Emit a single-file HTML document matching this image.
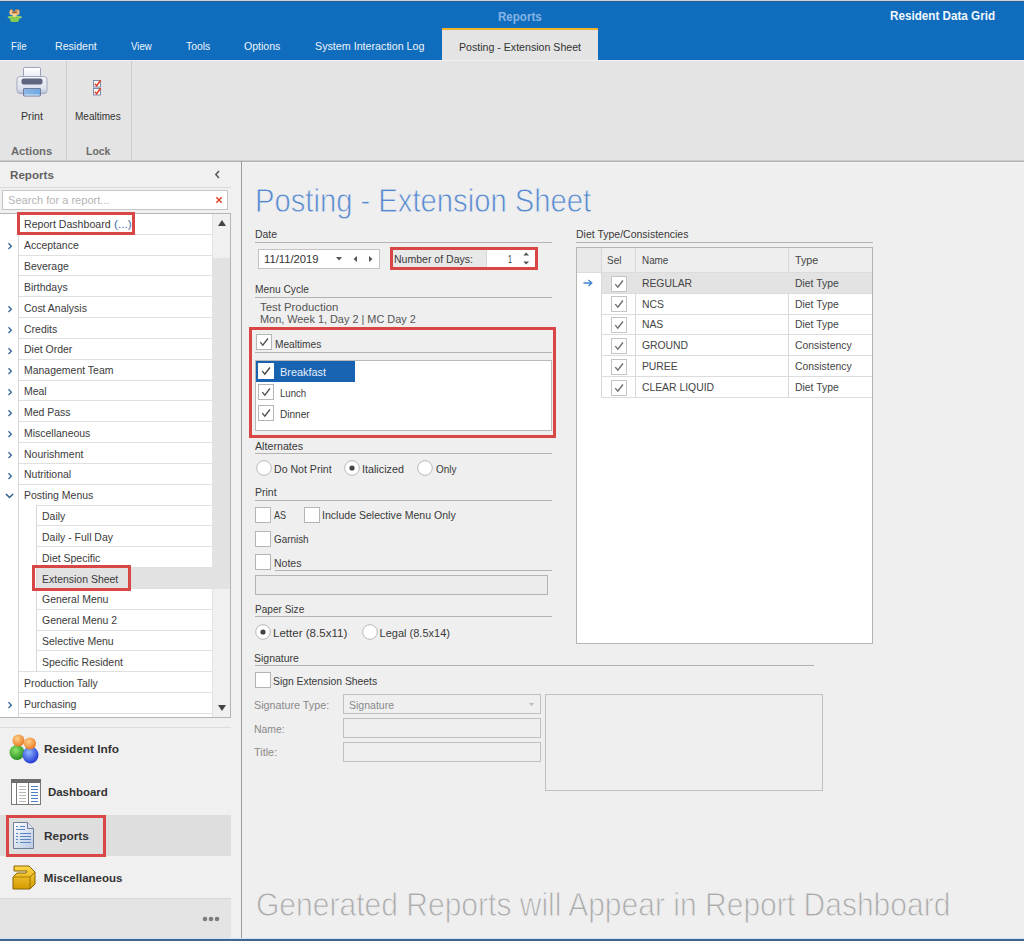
<!DOCTYPE html>
<html><head><meta charset="utf-8">
<style>
*{margin:0;padding:0;box-sizing:border-box}
html,body{width:1024px;height:941px;overflow:hidden;background:#efefef;font-family:"Liberation Sans",sans-serif;font-size:11px;color:#333}
.a{position:absolute;white-space:nowrap}
.t{position:absolute;white-space:nowrap;line-height:1}
</style></head><body>
<div class="a" style="left:0px;top:0px;width:1024px;height:60px;background:#106dbd;"></div>
<div class="a" style="left:0px;top:0px;width:1024px;height:1px;background:#c9d2db"></div>
<div class="a" style="left:0px;top:1px;width:1024px;height:1px;background:#2d5f90"></div>
<svg class="a" style="left:6px;top:8px" width="18" height="16" viewBox="0 0 18 16">
    <ellipse cx="8.8" cy="9.2" rx="7.2" ry="1.8" fill="#8fd46a"/>
    <rect x="4" y="8.5" width="9" height="5.5" rx="2.5" fill="#86cc52"/>
    <path d="M3.5 2.5 Q4.5 0.8 6.5 1.5 L8 4 L9.5 1.5 Q12 0.8 13.5 2.5 L13 7 L4 7 Z" fill="#c98a4e"/>
    <ellipse cx="5.2" cy="4.5" rx="1.7" ry="2.6" fill="#f0c894"/>
    <ellipse cx="12" cy="4.5" rx="1.5" ry="2.4" fill="#e6b47c"/>
    <ellipse cx="8.6" cy="6.8" rx="2.4" ry="2.4" fill="#f3cf9a"/>
    <path d="M6.2 4 Q8.5 5.5 10.8 4" fill="none" stroke="#9a5a28" stroke-width="1.2"/>
</svg>

<div class="a" style="left:442px;top:28px;width:156px;height:32px;background:#e4e4e4;"></div>
<div class="a" style="left:442px;top:28px;width:156px;height:2px;background:#f0b429"></div>
<div class="a" style="left:0px;top:60px;width:1024px;height:100px;background:#e4e4e4;"></div>
<div class="a" style="left:0px;top:60px;width:1024px;height:1px;background:#eef2f6"></div>
<div class="a" style="left:0px;top:160px;width:1024px;height:1px;background:#cccccc"></div>
<div class="a" style="left:0px;top:161px;width:1024px;height:1px;background:#b0b0b0"></div>
<div class="a" style="left:66px;top:61px;width:1px;height:99px;background:#cbcbcb"></div>
<div class="a" style="left:131px;top:61px;width:1px;height:99px;background:#cbcbcb"></div>
<svg class="a" style="left:15px;top:66px" width="34" height="32" viewBox="0 0 34 32">
    <defs><linearGradient id="pb" x1="0" y1="0" x2="0" y2="1"><stop offset="0" stop-color="#f4f5fb"/><stop offset="0.7" stop-color="#dfe2ee"/><stop offset="1" stop-color="#b4bcd8"/></linearGradient>
    <linearGradient id="pp" x1="0" y1="0" x2="0" y2="1"><stop offset="0" stop-color="#ffffff"/><stop offset="1" stop-color="#e2e6f2"/></linearGradient>
    <linearGradient id="pt" x1="0" y1="0" x2="1" y2="0"><stop offset="0" stop-color="#8fb6e6"/><stop offset="1" stop-color="#6fa8e0"/></linearGradient></defs>
    <rect x="8.5" y="1.5" width="17" height="13" rx="1" fill="url(#pp)" stroke="#9aa2b8"/>
    <rect x="2" y="10.5" width="30" height="17" rx="3" fill="url(#pb)" stroke="#a2a9c0"/>
    <rect x="6.5" y="12.5" width="21" height="6" rx="2" fill="#5e6680"/>
    <rect x="8.5" y="22.5" width="17" height="7.5" rx="0.5" fill="url(#pt)" stroke="#6f7a96"/>
    <line x1="9.5" y1="29" x2="24.5" y2="29" stroke="#d8ecfa"/>
  </svg>
  <svg class="a" style="left:93px;top:79px" width="9" height="18" viewBox="0 0 9 18">
    <rect x="0.5" y="1.5" width="7" height="6.5" fill="#fff" stroke="#7c8aa8"/>
    <rect x="0.5" y="9.5" width="7" height="6.5" fill="#fff" stroke="#7c8aa8"/>
    <path d="M1.8 4.8 L3.6 6.8 L7.6 1.2" fill="none" stroke="#e0412a" stroke-width="1.6"/>
    <path d="M1.8 12.8 L3.6 14.8 L7.6 9.2" fill="none" stroke="#e0412a" stroke-width="1.6"/>
  </svg>
<div class="a" style="left:0px;top:162px;width:241px;height:776px;background:#f0f0f0;"></div>
<div class="a" style="left:241px;top:161px;width:1px;height:777px;background:#9c9c9c"></div>
<div class="a" style="left:242px;top:162px;width:782px;height:776px;background:#efefef;"></div>
<div class="a" style="left:242px;top:162px;width:782px;height:1px;background:#f6f6f6"></div>
<svg class="a" style="left:214px;top:170px" width="7" height="9" viewBox="0 0 7 9"><path d="M5 1 L1.8 4.5 L5 8" fill="none" stroke="#555" stroke-width="1.5"/></svg>
<div class="a" style="left:0px;top:187px;width:231px;height:1px;background:#dadada"></div>
<div class="a" style="left:2px;top:190px;width:226px;height:20px;background:#fff;border:1px solid #c6c6c6;"></div>
<svg class="a" style="left:215px;top:196px" width="8" height="8" viewBox="0 0 8 8"><path d="M1.3 1.3 L6.7 6.7 M6.7 1.3 L1.3 6.7" stroke="#e5482e" stroke-width="1.5"/></svg>
<div class="a" style="left:0px;top:213px;width:231px;height:505px;background:#fff;border:1px solid #b5b5b5;border-left:none;"></div>
<div class="a" style="left:212px;top:214px;width:18px;height:503px;background:#f0f0f0;"></div>
<div class="a" style="left:212px;top:214px;width:1px;height:503px;background:#e3e3e3"></div>
<div class="a" style="left:212px;top:258px;width:18px;height:331px;background:#e2e2e2;"></div>
<svg class="a" style="left:218px;top:220px" width="8" height="6" viewBox="0 0 8 6"><path d="M0 6 L4 0 L8 6Z" fill="#444"/></svg>
<svg class="a" style="left:218px;top:705px" width="8" height="6" viewBox="0 0 8 6"><path d="M0 0 L4 6 L8 0Z" fill="#444"/></svg>
<div class="a" style="left:18px;top:234px;width:194px;height:1px;background:#e0e0e0"></div>
<svg class="a" style="left:7px;top:242.33px" width="6" height="9" viewBox="0 0 6 9"><path d="M1.5 1.3 L4.3 4.2 L1.5 7.1" fill="none" stroke="#3a6a9a" stroke-width="1.4"/></svg>
<div class="a" style="left:18px;top:255px;width:194px;height:1px;background:#e0e0e0"></div>
<div class="a" style="left:18px;top:275px;width:194px;height:1px;background:#e0e0e0"></div>
<div class="a" style="left:18px;top:296px;width:194px;height:1px;background:#e0e0e0"></div>
<svg class="a" style="left:7px;top:304.83px" width="6" height="9" viewBox="0 0 6 9"><path d="M1.5 1.3 L4.3 4.2 L1.5 7.1" fill="none" stroke="#3a6a9a" stroke-width="1.4"/></svg>
<div class="a" style="left:18px;top:317px;width:194px;height:1px;background:#e0e0e0"></div>
<svg class="a" style="left:7px;top:325.66px" width="6" height="9" viewBox="0 0 6 9"><path d="M1.5 1.3 L4.3 4.2 L1.5 7.1" fill="none" stroke="#3a6a9a" stroke-width="1.4"/></svg>
<div class="a" style="left:18px;top:338px;width:194px;height:1px;background:#e0e0e0"></div>
<svg class="a" style="left:7px;top:346.50px" width="6" height="9" viewBox="0 0 6 9"><path d="M1.5 1.3 L4.3 4.2 L1.5 7.1" fill="none" stroke="#3a6a9a" stroke-width="1.4"/></svg>
<div class="a" style="left:18px;top:359px;width:194px;height:1px;background:#e0e0e0"></div>
<svg class="a" style="left:7px;top:367.33px" width="6" height="9" viewBox="0 0 6 9"><path d="M1.5 1.3 L4.3 4.2 L1.5 7.1" fill="none" stroke="#3a6a9a" stroke-width="1.4"/></svg>
<div class="a" style="left:18px;top:380px;width:194px;height:1px;background:#e0e0e0"></div>
<svg class="a" style="left:7px;top:388.16px" width="6" height="9" viewBox="0 0 6 9"><path d="M1.5 1.3 L4.3 4.2 L1.5 7.1" fill="none" stroke="#3a6a9a" stroke-width="1.4"/></svg>
<div class="a" style="left:18px;top:400px;width:194px;height:1px;background:#e0e0e0"></div>
<svg class="a" style="left:7px;top:409.00px" width="6" height="9" viewBox="0 0 6 9"><path d="M1.5 1.3 L4.3 4.2 L1.5 7.1" fill="none" stroke="#3a6a9a" stroke-width="1.4"/></svg>
<div class="a" style="left:18px;top:421px;width:194px;height:1px;background:#e0e0e0"></div>
<svg class="a" style="left:7px;top:429.83px" width="6" height="9" viewBox="0 0 6 9"><path d="M1.5 1.3 L4.3 4.2 L1.5 7.1" fill="none" stroke="#3a6a9a" stroke-width="1.4"/></svg>
<div class="a" style="left:18px;top:442px;width:194px;height:1px;background:#e0e0e0"></div>
<svg class="a" style="left:7px;top:450.66px" width="6" height="9" viewBox="0 0 6 9"><path d="M1.5 1.3 L4.3 4.2 L1.5 7.1" fill="none" stroke="#3a6a9a" stroke-width="1.4"/></svg>
<div class="a" style="left:18px;top:463px;width:194px;height:1px;background:#e0e0e0"></div>
<svg class="a" style="left:7px;top:471.50px" width="6" height="9" viewBox="0 0 6 9"><path d="M1.5 1.3 L4.3 4.2 L1.5 7.1" fill="none" stroke="#3a6a9a" stroke-width="1.4"/></svg>
<div class="a" style="left:18px;top:484px;width:194px;height:1px;background:#e0e0e0"></div>
<svg class="a" style="left:5px;top:492.83px" width="9" height="6" viewBox="0 0 9 6"><path d="M1 1 L4.5 4.5 L8 1" fill="none" stroke="#2f5f8f" stroke-width="1.5"/></svg>
<div class="a" style="left:36px;top:505px;width:176px;height:1px;background:#e0e0e0"></div>
<div class="a" style="left:36px;top:525px;width:176px;height:1px;background:#e0e0e0"></div>
<div class="a" style="left:36px;top:546px;width:176px;height:1px;background:#e0e0e0"></div>
<div class="a" style="left:37px;top:567px;width:175px;height:21px;background:#e2e2e2;"></div>
<div class="a" style="left:36px;top:567px;width:176px;height:1px;background:#e0e0e0"></div>
<div class="a" style="left:36px;top:588px;width:176px;height:1px;background:#e0e0e0"></div>
<div class="a" style="left:36px;top:609px;width:176px;height:1px;background:#e0e0e0"></div>
<div class="a" style="left:36px;top:630px;width:176px;height:1px;background:#e0e0e0"></div>
<div class="a" style="left:36px;top:650px;width:176px;height:1px;background:#e0e0e0"></div>
<div class="a" style="left:18px;top:671px;width:194px;height:1px;background:#e0e0e0"></div>
<div class="a" style="left:18px;top:692px;width:194px;height:1px;background:#e0e0e0"></div>
<svg class="a" style="left:7px;top:700.66px" width="6" height="9" viewBox="0 0 6 9"><path d="M1.5 1.3 L4.3 4.2 L1.5 7.1" fill="none" stroke="#3a6a9a" stroke-width="1.4"/></svg>
<div class="a" style="left:18px;top:713px;width:194px;height:1px;background:#e0e0e0"></div>
<div class="a" style="left:18px;top:214px;width:1px;height:503px;background:#d6d6d6"></div>
<div class="a" style="left:36px;top:505px;width:1px;height:167px;background:#d6d6d6"></div>
<div class="a" style="left:17px;top:212px;width:118px;height:23px;background:none;border:3px solid #d94646;"></div>
<div class="a" style="left:32px;top:565px;width:99px;height:26px;background:none;border:3px solid #d94646;"></div>
<div class="a" style="left:0px;top:727px;width:231px;height:1px;background:#dcdcdc"></div>
<svg class="a" style="left:9px;top:733px" width="30" height="31" viewBox="0 0 30 31">
  <defs>
  <radialGradient id="og" cx="0.4" cy="0.35" r="0.7"><stop offset="0" stop-color="#ffd08a"/><stop offset="1" stop-color="#e8761c"/></radialGradient>
  <radialGradient id="gg" cx="0.4" cy="0.35" r="0.7"><stop offset="0" stop-color="#8fe36a"/><stop offset="1" stop-color="#1f8a1a"/></radialGradient>
  <radialGradient id="bg" cx="0.4" cy="0.35" r="0.7"><stop offset="0" stop-color="#8fb8ff"/><stop offset="1" stop-color="#1a2fd0"/></radialGradient>
  </defs>
  <ellipse cx="8" cy="19.5" rx="7.5" ry="7.5" fill="url(#gg)"/>
  <circle cx="9.5" cy="7.5" r="6" fill="url(#og)"/>
  <ellipse cx="21.5" cy="22" rx="8" ry="8.5" fill="url(#bg)"/>
  <circle cx="21" cy="10.5" r="6" fill="url(#og)"/>
</svg>

<svg class="a" style="left:11px;top:779px" width="30" height="26" viewBox="0 0 30 26">
  <rect x="0.5" y="0.5" width="29" height="25" fill="#fdfdfd" stroke="#777"/>
  <rect x="0" y="0" width="30" height="4" fill="#6d6d6d"/>
  <line x1="5.5" y1="4" x2="5.5" y2="26" stroke="#777"/>
  <line x1="17.5" y1="4" x2="17.5" y2="26" stroke="#777"/>
  <g stroke="#b9b9b9" stroke-width="1"><line x1="8" y1="7.5" x2="15" y2="7.5"/><line x1="8" y1="10.5" x2="15" y2="10.5"/><line x1="8" y1="13.5" x2="15" y2="13.5"/><line x1="8" y1="16.5" x2="15" y2="16.5"/><line x1="8" y1="19.5" x2="15" y2="19.5"/><line x1="8" y1="22.5" x2="15" y2="22.5"/></g>
  <g stroke="#4a7fc4" stroke-width="1"><line x1="20" y1="7.5" x2="27" y2="7.5"/><line x1="20" y1="10.5" x2="27" y2="10.5"/><line x1="20" y1="13.5" x2="27" y2="13.5"/><line x1="20" y1="16.5" x2="27" y2="16.5"/><line x1="20" y1="19.5" x2="27" y2="19.5"/><line x1="20" y1="22.5" x2="27" y2="22.5"/></g>
</svg>

<div class="a" style="left:0px;top:815px;width:231px;height:41px;background:#dedede;"></div>
<svg class="a" style="left:13px;top:822px" width="22" height="27" viewBox="0 0 22 27">
  <defs><linearGradient id="rg" x1="0" y1="0" x2="1" y2="1"><stop offset="0" stop-color="#ffffff"/><stop offset="1" stop-color="#b8c8e0"/></linearGradient></defs>
  <path d="M0.5 0.5 H14.5 L20.5 6.5 V26.5 H0.5 Z" fill="url(#rg)" stroke="#6f7f9a"/>
  <path d="M14.5 0.5 V6.5 H20.5" fill="#dfe6f0" stroke="#6f7f9a"/>
  <g stroke="#5a86c8" stroke-width="1"><line x1="3" y1="4.5" x2="5" y2="4.5"/><line x1="7" y1="4.5" x2="12" y2="4.5"/><line x1="3" y1="7.5" x2="12" y2="7.5"/>
  <line x1="3" y1="11.5" x2="5" y2="11.5"/><line x1="7" y1="11.5" x2="18" y2="11.5"/>
  <line x1="3" y1="14.5" x2="5" y2="14.5"/><line x1="7" y1="14.5" x2="18" y2="14.5"/>
  <line x1="3" y1="17.5" x2="5" y2="17.5"/><line x1="7" y1="17.5" x2="18" y2="17.5"/>
  <line x1="3" y1="20.5" x2="5" y2="20.5"/><line x1="7" y1="20.5" x2="18" y2="20.5"/></g>
</svg>

<div class="a" style="left:6px;top:815px;width:100px;height:42px;background:none;border:3px solid #d94646;"></div>
<svg class="a" style="left:12px;top:865px" width="25" height="25" viewBox="0 0 25 25">
  <defs><linearGradient id="yg" x1="0" y1="0" x2="0" y2="1"><stop offset="0" stop-color="#ffd84a"/><stop offset="1" stop-color="#d49a00"/></linearGradient></defs>
  <path d="M2 1 H17 L23 7 V19 L18 24 H1 V12 L5 8 H14 L15 6 H2 Z" fill="url(#yg)" stroke="#8a6400" stroke-width="1"/>
  <path d="M18 24 V12 L23 7" fill="none" stroke="#9a7200"/>
  <path d="M1 12 H18" stroke="#b08000"/>
</svg>

<div class="a" style="left:0px;top:898px;width:231px;height:40px;background:#e4e4e4;border:1px solid #d8d8d8;border-left:none;border-right:none;border-bottom:none;"></div>
<svg class="a" style="left:202px;top:916px" width="18" height="6" viewBox="0 0 18 6"><circle cx="3" cy="3" r="2.3" fill="#7d7d7d"/><circle cx="9" cy="3" r="2.3" fill="#7d7d7d"/><circle cx="15" cy="3" r="2.3" fill="#7d7d7d"/></svg>
<div class="a" style="left:255px;top:242px;width:297px;height:1px;background:#b3b3b3"></div>
<div class="a" style="left:258px;top:249px;width:122px;height:20px;background:#fff;border:1px solid #c3c3c3;"></div>
<svg class="a" style="left:336px;top:257px" width="6" height="4" viewBox="0 0 6 4"><path d="M0 0H6L3 3.5Z" fill="#555"/></svg>
<svg class="a" style="left:353px;top:256px" width="4" height="6" viewBox="0 0 4 6"><path d="M4 0V6L0.5 3Z" fill="#555"/></svg>
<svg class="a" style="left:369px;top:256px" width="4" height="6" viewBox="0 0 4 6"><path d="M0 0V6L3.5 3Z" fill="#555"/></svg>
<div class="a" style="left:393px;top:250px;width:94px;height:17px;background:#e8e8e8;"></div>
<div class="a" style="left:487px;top:250px;width:48px;height:17px;background:#fff;"></div>
<div class="a" style="left:486px;top:250px;width:1px;height:17px;background:#d6d6d6"></div>
<svg class="a" style="left:523px;top:252px" width="7" height="13" viewBox="0 0 7 13"><path d="M0.3 3.6 L3.2 0.6 L6.1 3.6Z" fill="#555"/><path d="M0.3 9.6 L3.2 12.4 L6.1 9.6Z" fill="#555"/></svg>
<div class="a" style="left:390px;top:247px;width:148px;height:23px;background:none;border:3px solid #d94646;"></div>
<div class="a" style="left:255px;top:297px;width:297px;height:1px;background:#b3b3b3"></div>
<div class="a" style="left:256px;top:334px;width:16px;height:16px;background:#fff;border:1px solid #b5b5b5"></div>
<svg class="a" style="left:256px;top:334px" width="16" height="16" viewBox="0 0 15 15"><path d="M4 7.6 L6.4 10.4 L11.2 4.2" fill="none" stroke="#555" stroke-width="1.3"/></svg>
<div class="a" style="left:255px;top:352px;width:297px;height:1px;background:#b3b3b3"></div>
<div class="a" style="left:255px;top:360px;width:297px;height:71px;background:#fff;border:1px solid #b9b9b9;"></div>
<div class="a" style="left:256px;top:361px;width:99px;height:21px;background:#1863b1;"></div>
<div class="a" style="left:258px;top:363px;width:16px;height:16px;background:#fff;border:1px solid #fff"></div>
<svg class="a" style="left:258px;top:363px" width="16" height="16" viewBox="0 0 15 15"><path d="M4 7.6 L6.4 10.4 L11.2 4.2" fill="none" stroke="#444" stroke-width="1.3"/></svg>
<div class="a" style="left:258px;top:384px;width:16px;height:16px;background:#fff;border:1px solid #b5b5b5"></div>
<svg class="a" style="left:258px;top:384px" width="16" height="16" viewBox="0 0 15 15"><path d="M4 7.6 L6.4 10.4 L11.2 4.2" fill="none" stroke="#555" stroke-width="1.3"/></svg>
<div class="a" style="left:258px;top:405px;width:16px;height:16px;background:#fff;border:1px solid #b5b5b5"></div>
<svg class="a" style="left:258px;top:405px" width="16" height="16" viewBox="0 0 15 15"><path d="M4 7.6 L6.4 10.4 L11.2 4.2" fill="none" stroke="#555" stroke-width="1.3"/></svg>
<div class="a" style="left:249px;top:327px;width:307px;height:111px;background:none;border:3px solid #d94646;"></div>
<div class="a" style="left:255px;top:453px;width:297px;height:1px;background:#b3b3b3"></div>
<svg class="a" style="left:256px;top:460px" width="16" height="16" viewBox="0 0 16 16"><circle cx="8" cy="8" r="7.3" fill="#fff" stroke="#b9b9b9"/></svg>
<svg class="a" style="left:344px;top:460px" width="16" height="16" viewBox="0 0 16 16"><circle cx="8" cy="8" r="7.3" fill="#fff" stroke="#b9b9b9"/><circle cx="8" cy="8" r="2.6" fill="#444"/></svg>
<svg class="a" style="left:417px;top:460px" width="16" height="16" viewBox="0 0 16 16"><circle cx="8" cy="8" r="7.3" fill="#fff" stroke="#b9b9b9"/></svg>
<div class="a" style="left:255px;top:500px;width:297px;height:1px;background:#b3b3b3"></div>
<div class="a" style="left:255px;top:507px;width:16px;height:16px;background:#fff;border:1px solid #b5b5b5"></div>
<div class="a" style="left:304px;top:507px;width:16px;height:16px;background:#fff;border:1px solid #b5b5b5"></div>
<div class="a" style="left:255px;top:531px;width:16px;height:16px;background:#fff;border:1px solid #b5b5b5"></div>
<div class="a" style="left:255px;top:554px;width:16px;height:16px;background:#fff;border:1px solid #b5b5b5"></div>
<div class="a" style="left:275px;top:570px;width:277px;height:1px;background:#b3b3b3"></div>
<div class="a" style="left:255px;top:575px;width:293px;height:20px;background:#ececec;border:1px solid #b5b5b5;"></div>
<div class="a" style="left:255px;top:616px;width:297px;height:1px;background:#b3b3b3"></div>
<svg class="a" style="left:255px;top:624px" width="16" height="16" viewBox="0 0 16 16"><circle cx="8" cy="8" r="7.3" fill="#fff" stroke="#b9b9b9"/><circle cx="8" cy="8" r="2.6" fill="#444"/></svg>
<svg class="a" style="left:362px;top:624px" width="16" height="16" viewBox="0 0 16 16"><circle cx="8" cy="8" r="7.3" fill="#fff" stroke="#b9b9b9"/></svg>
<div class="a" style="left:255px;top:665px;width:559px;height:1px;background:#b3b3b3"></div>
<div class="a" style="left:255px;top:672px;width:16px;height:16px;background:#fff;border:1px solid #b5b5b5"></div>
<div class="a" style="left:343px;top:694px;width:198px;height:20px;background:#efefef;border:1px solid #c0c0c0;"></div>
<svg class="a" style="left:529px;top:703px" width="5" height="3" viewBox="0 0 5 3"><path d="M0 0H5L2.5 3Z" fill="#bbb"/></svg>
<div class="a" style="left:343px;top:718px;width:198px;height:20px;background:#efefef;border:1px solid #c0c0c0;"></div>
<div class="a" style="left:343px;top:742px;width:198px;height:20px;background:#efefef;border:1px solid #c0c0c0;"></div>
<div class="a" style="left:545px;top:694px;width:278px;height:97px;background:#efefef;border:1px solid #c0c0c0;"></div>
<div class="a" style="left:576px;top:242px;width:297px;height:1px;background:#b3b3b3"></div>
<div class="a" style="left:576px;top:247px;width:297px;height:397px;background:#fff;border:1px solid #b5b5b5;"></div>
<div class="a" style="left:577px;top:248px;width:295px;height:24px;background:#eeeeee;"></div>
<div class="a" style="left:577px;top:248px;width:24px;height:24px;background:#e9e9e9;"></div>
<div class="a" style="left:601px;top:248px;width:1px;height:149px;background:#d9d9d9"></div>
<div class="a" style="left:635px;top:248px;width:1px;height:149px;background:#d9d9d9"></div>
<div class="a" style="left:788px;top:248px;width:1px;height:149px;background:#d9d9d9"></div>
<div class="a" style="left:577px;top:272px;width:295px;height:1px;background:#dcdcdc"></div>
<div class="a" style="left:602px;top:273px;width:270px;height:20px;background:#e3e3e3;"></div>
<div class="a" style="left:601px;top:293px;width:271px;height:1px;background:#dcdcdc"></div>
<div class="a" style="left:611px;top:276px;width:16px;height:16px;background:#fff;border:1px solid #c4c4c4"></div>
<svg class="a" style="left:611px;top:276px" width="16" height="16" viewBox="0 0 15 15"><path d="M4 7.6 L6.4 10.4 L11.2 4.2" fill="none" stroke="#6e6e6e" stroke-width="1.3"/></svg>
<div class="a" style="left:601px;top:314px;width:271px;height:1px;background:#dcdcdc"></div>
<div class="a" style="left:611px;top:296px;width:16px;height:16px;background:#fff;border:1px solid #c4c4c4"></div>
<svg class="a" style="left:611px;top:296px" width="16" height="16" viewBox="0 0 15 15"><path d="M4 7.6 L6.4 10.4 L11.2 4.2" fill="none" stroke="#6e6e6e" stroke-width="1.3"/></svg>
<div class="a" style="left:601px;top:334px;width:271px;height:1px;background:#dcdcdc"></div>
<div class="a" style="left:611px;top:317px;width:16px;height:16px;background:#fff;border:1px solid #c4c4c4"></div>
<svg class="a" style="left:611px;top:317px" width="16" height="16" viewBox="0 0 15 15"><path d="M4 7.6 L6.4 10.4 L11.2 4.2" fill="none" stroke="#6e6e6e" stroke-width="1.3"/></svg>
<div class="a" style="left:601px;top:355px;width:271px;height:1px;background:#dcdcdc"></div>
<div class="a" style="left:611px;top:338px;width:16px;height:16px;background:#fff;border:1px solid #c4c4c4"></div>
<svg class="a" style="left:611px;top:338px" width="16" height="16" viewBox="0 0 15 15"><path d="M4 7.6 L6.4 10.4 L11.2 4.2" fill="none" stroke="#6e6e6e" stroke-width="1.3"/></svg>
<div class="a" style="left:601px;top:376px;width:271px;height:1px;background:#dcdcdc"></div>
<div class="a" style="left:611px;top:359px;width:16px;height:16px;background:#fff;border:1px solid #c4c4c4"></div>
<svg class="a" style="left:611px;top:359px" width="16" height="16" viewBox="0 0 15 15"><path d="M4 7.6 L6.4 10.4 L11.2 4.2" fill="none" stroke="#6e6e6e" stroke-width="1.3"/></svg>
<div class="a" style="left:601px;top:397px;width:271px;height:1px;background:#dcdcdc"></div>
<div class="a" style="left:611px;top:380px;width:16px;height:16px;background:#fff;border:1px solid #c4c4c4"></div>
<svg class="a" style="left:611px;top:380px" width="16" height="16" viewBox="0 0 15 15"><path d="M4 7.6 L6.4 10.4 L11.2 4.2" fill="none" stroke="#6e6e6e" stroke-width="1.3"/></svg>
<svg class="a" style="left:583px;top:279px" width="10" height="8" viewBox="0 0 10 8"><path d="M0.5 4H8.5 M5.5 1 L8.8 4 L5.5 7" fill="none" stroke="#3f86d0" stroke-width="1.3"/></svg>
<div class="t" style="left:498.00px;top:11.14px;font-size:12px;font-weight:700;color:#85b3e6;transform:scaleX(0.964);transform-origin:0 0;">Reports</div>
<div class="t" style="left:889.60px;top:9.99px;font-size:12.3px;font-weight:700;color:#f2f7fd;transform:scaleX(0.949);transform-origin:0 0;">Resident Data Grid</div>
<div class="t" style="left:10.60px;top:41.39px;font-size:11px;font-weight:400;color:#eef4fb;transform:scaleX(0.875);transform-origin:0 0;">File</div>
<div class="t" style="left:54.70px;top:41.49px;font-size:11px;font-weight:400;color:#eef4fb;transform:scaleX(0.962);transform-origin:0 0;">Resident</div>
<div class="t" style="left:130.90px;top:41.49px;font-size:11px;font-weight:400;color:#eef4fb;transform:scaleX(0.878);transform-origin:0 0;">View</div>
<div class="t" style="left:186.00px;top:41.49px;font-size:11px;font-weight:400;color:#eef4fb;transform:scaleX(0.940);transform-origin:0 0;">Tools</div>
<div class="t" style="left:244.40px;top:41.49px;font-size:11px;font-weight:400;color:#eef4fb;transform:scaleX(0.958);transform-origin:0 0;">Options</div>
<div class="t" style="left:314.80px;top:41.49px;font-size:11px;font-weight:400;color:#eef4fb;transform:scaleX(0.973);transform-origin:0 0;">System Interaction Log</div>
<div class="t" style="left:458.50px;top:41.69px;font-size:11px;font-weight:400;color:#333;transform:scaleX(0.964);transform-origin:0 0;">Posting - Extension Sheet</div>
<div class="t" style="left:20.50px;top:111.19px;font-size:11px;font-weight:400;color:#333;transform:scaleX(0.971);transform-origin:0 0;">Print</div>
<div class="t" style="left:74.90px;top:111.19px;font-size:11px;font-weight:400;color:#333;transform:scaleX(0.911);transform-origin:0 0;">Mealtimes</div>
<div class="t" style="left:11.20px;top:146.39px;font-size:11px;font-weight:700;color:#6c6c6c;transform:scaleX(1.022);transform-origin:0 0;">Actions</div>
<div class="t" style="left:85.50px;top:146.39px;font-size:11px;font-weight:700;color:#6c6c6c;transform:scaleX(0.949);transform-origin:0 0;">Lock</div>
<div class="t" style="left:9.50px;top:170.09px;font-size:11px;font-weight:700;color:#626262;transform:scaleX(1.057);transform-origin:0 0;">Reports</div>
<div class="t" style="left:7.90px;top:195.49px;font-size:11px;font-weight:400;color:#b4b4b4;transform:scaleX(1.007);transform-origin:0 0;">Search for a report...</div>
<div class="t" style="left:24.40px;top:219.36px;font-size:10.8px;font-weight:400;color:#3a3a3a;transform:scaleX(0.982);transform-origin:0 0;">Report Dashboard</div>
<div class="t" style="left:24.40px;top:240.19px;font-size:10.8px;font-weight:400;color:#3a3a3a;transform:scaleX(0.97);transform-origin:0 0;">Acceptance</div>
<div class="t" style="left:24.40px;top:261.02px;font-size:10.8px;font-weight:400;color:#3a3a3a;transform:scaleX(0.97);transform-origin:0 0;">Beverage</div>
<div class="t" style="left:24.40px;top:281.85px;font-size:10.8px;font-weight:400;color:#3a3a3a;transform:scaleX(0.97);transform-origin:0 0;">Birthdays</div>
<div class="t" style="left:24.40px;top:302.69px;font-size:10.8px;font-weight:400;color:#3a3a3a;transform:scaleX(0.97);transform-origin:0 0;">Cost Analysis</div>
<div class="t" style="left:24.40px;top:323.52px;font-size:10.8px;font-weight:400;color:#3a3a3a;transform:scaleX(0.97);transform-origin:0 0;">Credits</div>
<div class="t" style="left:24.40px;top:344.35px;font-size:10.8px;font-weight:400;color:#3a3a3a;transform:scaleX(0.97);transform-origin:0 0;">Diet Order</div>
<div class="t" style="left:24.40px;top:365.19px;font-size:10.8px;font-weight:400;color:#3a3a3a;transform:scaleX(0.97);transform-origin:0 0;">Management Team</div>
<div class="t" style="left:24.40px;top:386.02px;font-size:10.8px;font-weight:400;color:#3a3a3a;transform:scaleX(0.97);transform-origin:0 0;">Meal</div>
<div class="t" style="left:24.40px;top:406.85px;font-size:10.8px;font-weight:400;color:#3a3a3a;transform:scaleX(0.97);transform-origin:0 0;">Med Pass</div>
<div class="t" style="left:24.40px;top:427.69px;font-size:10.8px;font-weight:400;color:#3a3a3a;transform:scaleX(0.97);transform-origin:0 0;">Miscellaneous</div>
<div class="t" style="left:24.40px;top:448.52px;font-size:10.8px;font-weight:400;color:#3a3a3a;transform:scaleX(0.97);transform-origin:0 0;">Nourishment</div>
<div class="t" style="left:24.40px;top:469.35px;font-size:10.8px;font-weight:400;color:#3a3a3a;transform:scaleX(0.97);transform-origin:0 0;">Nutritional</div>
<div class="t" style="left:24.40px;top:490.18px;font-size:10.8px;font-weight:400;color:#3a3a3a;transform:scaleX(0.97);transform-origin:0 0;">Posting Menus</div>
<div class="t" style="left:42.10px;top:511.02px;font-size:10.8px;font-weight:400;color:#3a3a3a;transform:scaleX(0.97);transform-origin:0 0;">Daily</div>
<div class="t" style="left:42.10px;top:531.85px;font-size:10.8px;font-weight:400;color:#3a3a3a;transform:scaleX(0.97);transform-origin:0 0;">Daily - Full Day</div>
<div class="t" style="left:42.10px;top:552.68px;font-size:10.8px;font-weight:400;color:#3a3a3a;transform:scaleX(0.97);transform-origin:0 0;">Diet Specific</div>
<div class="t" style="left:42.10px;top:573.52px;font-size:10.8px;font-weight:400;color:#3a3a3a;transform:scaleX(0.97);transform-origin:0 0;">Extension Sheet</div>
<div class="t" style="left:42.10px;top:594.35px;font-size:10.8px;font-weight:400;color:#3a3a3a;transform:scaleX(0.97);transform-origin:0 0;">General Menu</div>
<div class="t" style="left:42.10px;top:615.18px;font-size:10.8px;font-weight:400;color:#3a3a3a;transform:scaleX(0.97);transform-origin:0 0;">General Menu 2</div>
<div class="t" style="left:42.10px;top:636.02px;font-size:10.8px;font-weight:400;color:#3a3a3a;transform:scaleX(0.97);transform-origin:0 0;">Selective Menu</div>
<div class="t" style="left:42.10px;top:656.85px;font-size:10.8px;font-weight:400;color:#3a3a3a;transform:scaleX(0.97);transform-origin:0 0;">Specific Resident</div>
<div class="t" style="left:24.40px;top:677.68px;font-size:10.8px;font-weight:400;color:#3a3a3a;transform:scaleX(0.97);transform-origin:0 0;">Production Tally</div>
<div class="t" style="left:24.40px;top:698.51px;font-size:10.8px;font-weight:400;color:#3a3a3a;transform:scaleX(0.97);transform-origin:0 0;">Purchasing</div>
<div class="t" style="left:114.20px;top:219.36px;font-size:10.8px;font-weight:400;color:#3a6fb0;transform:scaleX(1.084);transform-origin:0 0;">(...)</div>
<div class="t" style="left:43.80px;top:743.56px;font-size:11.5px;font-weight:700;color:#333;transform:scaleX(1.029);transform-origin:0 0;">Resident Info</div>
<div class="t" style="left:48.00px;top:787.36px;font-size:11.5px;font-weight:700;color:#333;transform:scaleX(0.994);transform-origin:0 0;">Dashboard</div>
<div class="t" style="left:43.80px;top:831.06px;font-size:11.5px;font-weight:700;color:#333;transform:scaleX(1.031);transform-origin:0 0;">Reports</div>
<div class="t" style="left:43.80px;top:872.96px;font-size:11.5px;font-weight:700;color:#333;">Miscellaneous</div>
<div class="t" style="left:254.58px;top:183.41px;font-size:34px;font-weight:400;color:#5588d0;transform:scaleX(0.859);transform-origin:0 0;-webkit-text-stroke:0.8px #efefef;">Posting - Extension Sheet</div>
<div class="t" style="left:254.70px;top:229.49px;font-size:11px;font-weight:400;color:#3a3a3a;transform:scaleX(0.947);transform-origin:0 0;">Date</div>
<div class="t" style="left:264.40px;top:254.49px;font-size:11px;font-weight:400;color:#333;transform:scaleX(1.019);transform-origin:0 0;">11/11/2019</div>
<div class="t" style="left:393.60px;top:254.39px;font-size:11px;font-weight:400;color:#3a3a3a;transform:scaleX(0.957);transform-origin:0 0;">Number of Days:</div>
<div class="t" style="left:508.40px;top:254.39px;font-size:11px;font-weight:400;color:#333;transform:scaleX(0.650);transform-origin:0 0;">1</div>
<div class="t" style="left:254.70px;top:284.29px;font-size:11px;font-weight:400;color:#3a3a3a;transform:scaleX(0.930);transform-origin:0 0;">Menu Cycle</div>
<div class="t" style="left:260.30px;top:301.89px;font-size:11px;font-weight:400;color:#555;transform:scaleX(1.033);transform-origin:0 0;">Test Production</div>
<div class="t" style="left:260.30px;top:314.49px;font-size:11px;font-weight:400;color:#555;transform:scaleX(0.990);transform-origin:0 0;">Mon, Week 1, Day 2 | MC Day 2</div>
<div class="t" style="left:274.70px;top:339.09px;font-size:11px;font-weight:400;color:#3a3a3a;transform:scaleX(0.924);transform-origin:0 0;">Mealtimes</div>
<div class="t" style="left:280.00px;top:367.19px;font-size:11px;font-weight:400;color:#e6eef8;transform:scaleX(0.991);transform-origin:0 0;">Breakfast</div>
<div class="t" style="left:280.00px;top:387.99px;font-size:11px;font-weight:400;color:#3a3a3a;transform:scaleX(0.871);transform-origin:0 0;">Lunch</div>
<div class="t" style="left:280.00px;top:408.89px;font-size:11px;font-weight:400;color:#3a3a3a;transform:scaleX(0.916);transform-origin:0 0;">Dinner</div>
<div class="t" style="left:254.70px;top:440.69px;font-size:11px;font-weight:400;color:#3a3a3a;transform:scaleX(0.971);transform-origin:0 0;">Alternates</div>
<div class="t" style="left:274.00px;top:463.69px;font-size:11px;font-weight:400;color:#3a3a3a;transform:scaleX(0.962);transform-origin:0 0;">Do Not Print</div>
<div class="t" style="left:361.82px;top:463.69px;font-size:11px;font-weight:400;color:#3a3a3a;transform:scaleX(0.979);transform-origin:0 0;">Italicized</div>
<div class="t" style="left:435.80px;top:463.69px;font-size:11px;font-weight:400;color:#3a3a3a;transform:scaleX(0.904);transform-origin:0 0;">Only</div>
<div class="t" style="left:254.70px;top:487.29px;font-size:11px;font-weight:400;color:#3a3a3a;transform:scaleX(0.953);transform-origin:0 0;">Print</div>
<div class="t" style="left:273.60px;top:510.49px;font-size:11px;font-weight:400;color:#3a3a3a;transform:scaleX(0.823);transform-origin:0 0;">AS</div>
<div class="t" style="left:321.64px;top:510.49px;font-size:11px;font-weight:400;color:#3a3a3a;transform:scaleX(0.959);transform-origin:0 0;">Include Selective Menu Only</div>
<div class="t" style="left:273.60px;top:534.29px;font-size:11px;font-weight:400;color:#3a3a3a;transform:scaleX(0.898);transform-origin:0 0;">Garnish</div>
<div class="t" style="left:273.60px;top:558.19px;font-size:11px;font-weight:400;color:#3a3a3a;transform:scaleX(0.954);transform-origin:0 0;">Notes</div>
<div class="t" style="left:254.50px;top:604.49px;font-size:11px;font-weight:400;color:#3a3a3a;transform:scaleX(0.915);transform-origin:0 0;">Paper Size</div>
<div class="t" style="left:272.70px;top:628.09px;font-size:11px;font-weight:400;color:#3a3a3a;transform:scaleX(1.051);transform-origin:0 0;">Letter (8.5x11)</div>
<div class="t" style="left:379.60px;top:628.09px;font-size:11px;font-weight:400;color:#3a3a3a;">Legal (8.5x14)</div>
<div class="t" style="left:254.40px;top:653.39px;font-size:11px;font-weight:400;color:#3a3a3a;transform:scaleX(0.954);transform-origin:0 0;">Signature</div>
<div class="t" style="left:273.40px;top:676.29px;font-size:11px;font-weight:400;color:#3a3a3a;transform:scaleX(0.941);transform-origin:0 0;">Sign Extension Sheets</div>
<div class="t" style="left:254.40px;top:699.69px;font-size:11px;font-weight:400;color:#8a8a8a;transform:scaleX(0.978);transform-origin:0 0;">Signature Type:</div>
<div class="t" style="left:348.70px;top:699.69px;font-size:11px;font-weight:400;color:#8a8a8a;transform:scaleX(0.956);transform-origin:0 0;">Signature</div>
<div class="t" style="left:254.40px;top:723.69px;font-size:11px;font-weight:400;color:#8a8a8a;transform:scaleX(0.946);transform-origin:0 0;">Name:</div>
<div class="t" style="left:254.40px;top:747.49px;font-size:11px;font-weight:400;color:#8a8a8a;transform:scaleX(0.988);transform-origin:0 0;">Title:</div>
<div class="t" style="left:255.78px;top:889.48px;font-size:32.5px;font-weight:400;color:#aaaaaa;transform:scaleX(0.924);transform-origin:0 0;-webkit-text-stroke:0.9px #efefef;">Generated Reports will Appear in Report Dashboard</div>
<div class="t" style="left:575.90px;top:229.49px;font-size:11px;font-weight:400;color:#3a3a3a;transform:scaleX(0.954);transform-origin:0 0;">Diet Type/Consistencies</div>
<div class="t" style="left:607.20px;top:254.99px;font-size:11px;font-weight:400;color:#444;transform:scaleX(0.909);transform-origin:0 0;">Sel</div>
<div class="t" style="left:641.90px;top:254.99px;font-size:11px;font-weight:400;color:#444;transform:scaleX(0.897);transform-origin:0 0;">Name</div>
<div class="t" style="left:795.00px;top:254.99px;font-size:11px;font-weight:400;color:#444;transform:scaleX(0.973);transform-origin:0 0;">Type</div>
<div class="t" style="left:641.90px;top:278.89px;font-size:10.4px;font-weight:400;color:#444;">REGULAR</div>
<div class="t" style="left:795.00px;top:278.89px;font-size:10.4px;font-weight:400;color:#444;">Diet Type</div>
<div class="t" style="left:641.90px;top:299.69px;font-size:10.4px;font-weight:400;color:#444;">NCS</div>
<div class="t" style="left:795.00px;top:299.69px;font-size:10.4px;font-weight:400;color:#444;">Diet Type</div>
<div class="t" style="left:641.90px;top:320.49px;font-size:10.4px;font-weight:400;color:#444;">NAS</div>
<div class="t" style="left:795.00px;top:320.49px;font-size:10.4px;font-weight:400;color:#444;">Diet Type</div>
<div class="t" style="left:641.90px;top:341.29px;font-size:10.4px;font-weight:400;color:#444;">GROUND</div>
<div class="t" style="left:795.00px;top:341.29px;font-size:10.4px;font-weight:400;color:#444;">Consistency</div>
<div class="t" style="left:641.90px;top:362.09px;font-size:10.4px;font-weight:400;color:#444;">PUREE</div>
<div class="t" style="left:795.00px;top:362.09px;font-size:10.4px;font-weight:400;color:#444;">Consistency</div>
<div class="t" style="left:641.90px;top:382.89px;font-size:10.4px;font-weight:400;color:#444;">CLEAR LIQUID</div>
<div class="t" style="left:795.00px;top:382.89px;font-size:10.4px;font-weight:400;color:#444;">Diet Type</div><div class="a" style="left:0;top:938px;width:1024px;height:1px;background:#cfe6f7"></div><div class="a" style="left:0;top:939px;width:1024px;height:2px;background:#3e6690"></div>
</body></html>
